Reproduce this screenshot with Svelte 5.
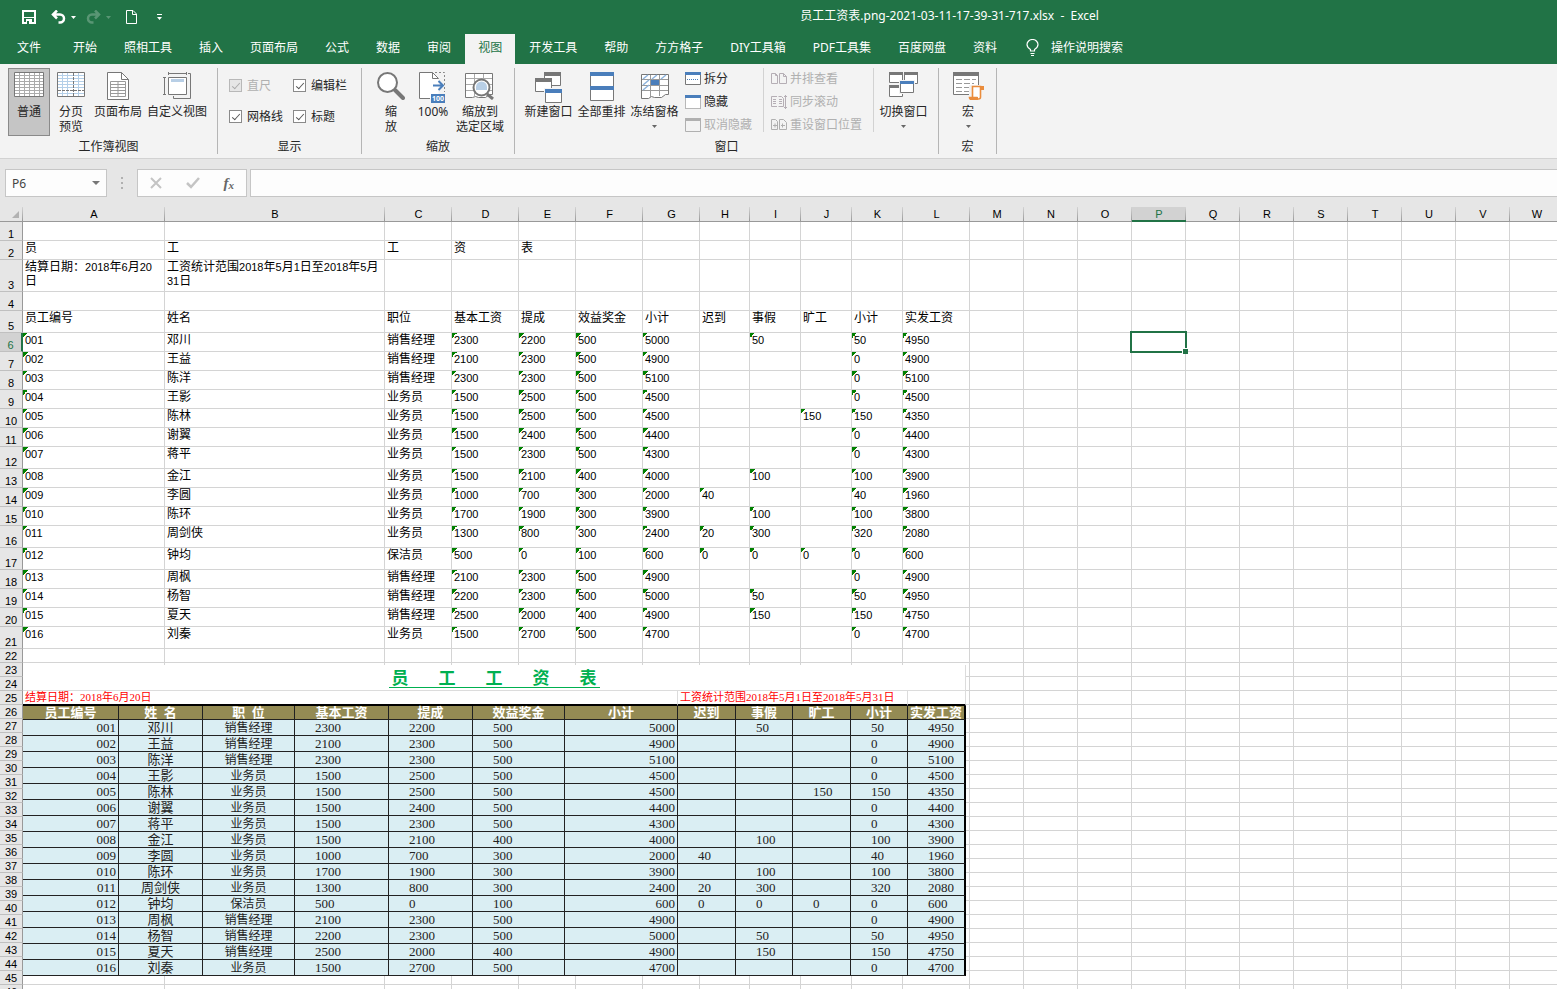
<script lang="ts">
    const tabs = [
        '文件', '开始', '照相工具', '插入', '页面布局', '公式', '数据', '审阅', '视图', '开发工具',
        '帮助', '方方格子', 'DIY工具箱', 'PDF工具集', '百度网盘', '资料'
    ]
    let activeTab = $state('视图')
    let innerWidth = $state(1200)
    let innerHeight = $state(800)

    const header = ['员工编号', '姓名', '职位', '基本工资', '提成', '效益奖金', '小计', '迟到', '事假', '旷工', '小计', '实发工资']
    const staff = [
        ['001', '邓川', '销售经理', '2300', '2200', '500', '5000', '', '50', '', '50', '4950'],
        ['002', '王益', '销售经理', '2100', '2300', '500', '4900', '', '', '', '0', '4900'],
        ['003', '陈洋', '销售经理', '2300', '2300', '500', '5100', '', '', '', '0', '5100'],
        ['004', '王影', '业务员', '1500', '2500', '500', '4500', '', '', '', '0', '4500'],
        ['005', '陈林', '业务员', '1500', '2500', '500', '4500', '', '', '150', '150', '4350'],
        ['006', '谢翼', '业务员', '1500', '2400', '500', '4400', '', '', '', '0', '4400'],
        ['007', '蒋平', '业务员', '1500', '2300', '500', '4300', '', '', '', '0', '4300'],
        ['008', '金江', '业务员', '1500', '2100', '400', '4000', '', '100', '', '100', '3900'],
        ['009', '李圆', '业务员', '1000', '700', '300', '2000', '40', '', '', '40', '1960'],
        ['010', '陈环', '业务员', '1700', '1900', '300', '3900', '', '100', '', '100', '3800'],
        ['011', '周剑侠', '业务员', '1300', '800', '300', '2400', '20', '300', '', '320', '2080'],
        ['012', '钟均', '保洁员', '500', '0', '100', '600', '0', '0', '0', '0', '600'],
        ['013', '周枫', '销售经理', '2100', '2300', '500', '4900', '', '', '', '0', '4900'],
        ['014', '杨智', '销售经理', '2200', '2300', '500', '5000', '', '50', '', '50', '4950'],
        ['015', '夏天', '销售经理', '2500', '2000', '400', '4900', '', '150', '', '150', '4750'],
        ['016', '刘秦', '业务员', '1500', '2700', '500', '4700', '', '', '', '0', '4700']
    ]

    const dateNote = '结算日期：2018年6月20日'
    const rangeNote = '工资统计范围2018年5月1日至2018年5月31日'

    // sheet rows, index 0 is row 1
    const cells: string[][] = [
        [],
        ['员', '工', '工', '资', '表'],
        [dateNote, rangeNote],
        [],
        header,
        ...staff
    ]

    const colWidths = [142, 220, 67, 67, 57, 67, 57, 50, 51, 51, 51, 67]
    const rowHeights = [19, 19, 32, 19, 22, 19, 19, 19, 19, 19, 19, 22, 19, 19, 19, 22, 22, 19, 19, 19, 22]
    const sum = (list: number[]) => list.reduce((a, b) => a + b, 0)

    // only as many columns and rows as the window can show
    const colCount = $derived(Math.max(16, 12 + Math.ceil((innerWidth - 23 - sum(colWidths)) / 54)))
    const rowCount = $derived(Math.max(45, 21 + Math.ceil((innerHeight - 222 - sum(rowHeights)) / 14)))
    const columns = $derived(Array.from({ length: colCount }, (_, i) => ({
        name: (i > 25 ? String.fromCharCode(64 + Math.floor(i / 26)) : '') + String.fromCharCode(65 + (i % 26)),
        width: colWidths[i] ?? 54
    })))
    const rows = $derived(Array.from({ length: rowCount }, (_, i) => ({ n: i + 1, height: rowHeights[i] ?? 14 })))

    const pictureWidths = [96, 84, 92, 94, 84, 92, 113, 58, 57, 58, 57, 58]
    const pictureHeader = header.map((h) => (h === '姓名' || h === '职位' ? h[0] + '  ' + h[1] : h))

    const isNumber = (v: string) => /^\d+$/.test(v)
    const parts = (v: string) => v.split(/(\d+)/).filter(Boolean)
</script>

<svelte:window bind:innerWidth bind:innerHeight />

{#snippet save()}
    <svg width="14" height="14" viewBox="0 0 14 14"><path d="M1 1h12v12H1z" fill="none" stroke="#fff" stroke-width="2" /><path d="M2 7h10v1H2zM4 9h6v5H4z" fill="#fff" /><path d="M5 11h2v3H5z" fill="#217346" /></svg>
{/snippet}
{#snippet undo()}
    <svg width="15" height="14" viewBox="0 0 15 14"><path d="M2 4.500H9a4 4 0 0 1 0 8H7.500M6 0.500L2 4.500l4 4" fill="none" stroke="#fff" stroke-width="2.500" /></svg>
{/snippet}
{#snippet caret()}
    <svg class="caret" width="5" height="3" viewBox="0 0 5 3"><path d="M0 0h5L2.500 3z" fill="currentColor" /></svg>
{/snippet}
{#snippet normalView()}
    <svg width="30" height="26" viewBox="0 0 30 26"><path d="M.5.5h29v24H.5z" fill="#fff" stroke="#777" /><path d="M1 3.500h28M1 6.500h28M1 9.500h28M1 12.500h28M1 15.500h28M1 18.500h28M1 21.500h28M5.500 1v23M10.500 1v23M15.500 1v23M20.500 1v23M25.500 1v23" stroke="#ababab" /></svg>
{/snippet}
{#snippet pageBreak()}
    <svg width="28" height="26" viewBox="0 0 28 26"><path d="M.5.5h27v24H.5z" fill="#fff" stroke="#777" /><path d="M1 3.500h26M1 6.500h26M1 9.500h26M1 12.500h26M1 15.500h26M1 21.500h26M5.500 1v23M10.500 1v23M21.500 1v23" stroke="#b4cfe8" /><path d="M1 18.500h26M16.500 1v23" stroke="#777" stroke-dasharray="3 1" /></svg>
{/snippet}
{#snippet pageLayout()}
    <svg width="22" height="28" viewBox="0 0 22 28"><path d="M.5.5h14l7 7v20H.5z" fill="#fff" stroke="#777" /><path d="M14.500.5v7h7" fill="none" stroke="#777" /><path d="M3.500 9.500h15v15h-15zM3.500 12.500h15M3.500 15.500h15M3.500 18.500h15M3.500 21.500h15M11 9.500v15" fill="none" stroke="#9a9a9a" /></svg>
{/snippet}
{#snippet customView()}
    <svg width="28" height="28" viewBox="0 0 28 28"><path d="M5.500 5.500h18v17h-18z" fill="#fff" stroke="#777" /><path d="M8 7h13v3H8z" fill="#b8cfe6" /><path d="M5.500 0v3M5.500 1.500h18M23.500 0v3M0 5.500h3M1.500 5.500v17M0 22.500h3M25 1.500h2.500v25h-17V24" fill="none" stroke="#777" /></svg>
{/snippet}
{#snippet magnifier()}
    <svg width="28" height="28" viewBox="0 0 28 28"><path d="M18 18l8 8" stroke="#777" stroke-width="4" stroke-linecap="round" /><circle cx="10.500" cy="10.500" r="9.500" fill="#fff" stroke="#777" stroke-width="2" /></svg>
{/snippet}
{#snippet zoom100()}
    <svg width="28" height="31" viewBox="0 0 28 31"><path d="M.5.5h14l5 6v20H.5z" fill="#fff" /><path d="M11 26.500H.5V.5h13l6 6" fill="none" stroke="#777" /><path d="M13.500.5v6h6" fill="none" stroke="#777" /><path d="M16 .5h9.500V20" fill="none" stroke="#888" stroke-dasharray="2 2" /><path d="M14 13.500h9M19.500 9l4.500 4.500-4.500 4.500" fill="none" stroke="#4a7ebb" stroke-width="2" /><path d="M12 22h14v9H12z" fill="#4a7ebb" /><text x="19" y="29" text-anchor="middle" font-size="7" font-weight="bold" fill="#fff">100</text></svg>
{/snippet}
{#snippet zoomSelection()}
    <svg width="30" height="28" viewBox="0 0 30 28"><path d="M.5 1.500h27v21h-3l-4 3h-7l-3-1-3 1H.5z" fill="#fff" stroke="#777" /><path d="M1 6.500h26M1 12.500h26M1 18.500h26M9.500 2v23M18.500 2v22" stroke="#aaa" /><path d="M22 22l6 5" stroke="#777" stroke-width="3" /><circle cx="16.500" cy="15.500" r="8" fill="#fff" stroke="#777" stroke-width="2" /><path d="M11 15a5.500 5.500 0 0 1 11 0v3H11z" fill="#b8cfe6" /></svg>
{/snippet}
{#snippet newWindow()}
    <svg width="28" height="31" viewBox="0 0 28 31"><path d="M9.500.5h16v13h-16z" fill="#fff" stroke="#777" /><path d="M9 0h17v4H9z" fill="#777" /><path d="M.5 6.500h16v13H.5z" fill="#fff" stroke="#777" /><path d="M0 6h17v4H0z" fill="#777" /><path d="M9 16h19v15H9z" fill="#f3f3f3" /><path d="M10.500 17.500h16v13h-16z" fill="#fff" stroke="#777" /><path d="M10 17h17v4H10z" fill="#4a7ebb" /></svg>
{/snippet}
{#snippet arrangeAll()}
    <svg width="24" height="29" viewBox="0 0 24 29"><path d="M.5.5h23v28H.5z" fill="#fff" stroke="#777" /><path d="M0 0h24v4H0zM0 14h24v4H0z" fill="#4a7ebb" /></svg>
{/snippet}
{#snippet freezePanes()}
    <svg width="28" height="28" viewBox="0 0 28 28"><path d="M.5 2.500h27v20h-3l-4 3h-7l-3 -1-3 2H.5z" fill="#fff" stroke="#777" /><path d="M1 7.500h26M1 13.500h26M1 18.500h26M9.500 3v22M18.500 3v21" stroke="#999" /><path d="M2 7l5-4M11 7l5-4M20 7l5-4M2 13l6-5M2 18l6-5" stroke="#8db3dc" stroke-width="1.500" /><path d="M10 8h8v5h-8z" fill="#4a7ebb" /></svg>
{/snippet}
{#snippet switchWindow()}
    <svg width="29" height="26" viewBox="0 0 29 26"><path d="M.5.500h13v10H.5zM15.500.5h13v11h-13zM.5 13.500h13v11H.5z" fill="#fff" stroke="#777" /><path d="M0 0h14v3H0zM15 0h14v3H15zM0 13h14v3H0z" fill="#777" /><path d="M10 8h16v14H10z" fill="#f3f3f3" /><path d="M11.500 9.500h13v11h-13z" fill="#fff" stroke="#777" /><path d="M11 9h14v3H11z" fill="#4a7ebb" /></svg>
{/snippet}
{#snippet macro()}
    <svg width="31" height="29" viewBox="0 0 31 29"><path d="M.5.5h25v22H.5z" fill="#fff" stroke="#777" /><path d="M0 0h26v4H0z" fill="#777" /><path d="M3 7.500h6M3 11.500h6M3 15.500h6M3 19.500h6M11 7.500h6M11 11.500h6M11 15.500h5M11 19.500h5M19 7.500h4M19 11.500h2" stroke="#999" /><path d="M16 13h15v15H16z" fill="#f3f3f3" /><path d="M19.500 25V14.500h8V25q0 2-2 2h-7q-2 0-2-1.500h8" fill="#fff" stroke="#ea8c3c" stroke-width="1.600" /><path d="M27 14h4v4h-3M16 25h9v3h-8z" fill="#ea8c3c" /></svg>
{/snippet}
{#snippet split()}
    <svg width="16" height="14" viewBox="0 0 16 14"><path d="M.5.5h15v12H.5z" fill="#fff" stroke="#777" /><path d="M0 0h16v3H0z" fill="#4a7ebb" /><path d="M2 7.500h12" stroke="#4a7ebb" stroke-dasharray="1 1" /></svg>
{/snippet}
{#snippet hide()}
    <svg width="16" height="14" viewBox="0 0 16 14"><path d="M.5.5h15v13H.5z" fill="#fff" stroke="#777" stroke-dasharray="1 1" /><path d="M0 0h16v3H0z" fill="#4a7ebb" /></svg>
{/snippet}
{#snippet unhide()}
    <svg width="16" height="14" viewBox="0 0 16 14"><path d="M.5.5h15v13H.5z" fill="#f3f3f3" stroke="#b0b0b0" /><path d="M0 0h16v3H0z" fill="#b0b0b0" /></svg>
{/snippet}
{#snippet sideBySide()}
    <svg width="16" height="12" viewBox="0 0 16 12"><path d="M.5.5h4l2 2v8h-6zM8.500.5h4l3 3v7h-7zM4.500.5v2h2M12.500.5v3h3" fill="none" stroke="#b5aeb5" /></svg>
{/snippet}
{#snippet syncScroll()}
    <svg width="16" height="16" viewBox="0 0 16 16"><path d="M6 2.500H.5v10H6M7.500 2.500h3l2 2v8h-5M2 5.500h3M2 7.500h3M2 9.500h3M8 5.500h3M8 7.500h3M8 9.500h3M14.500 1v14M13 2.500h3M13 13.500h3" fill="none" stroke="#b5aeb5" /></svg>
{/snippet}
{#snippet resetPos()}
    <svg width="16" height="12" viewBox="0 0 16 12"><path d="M.5.5h4l2 2v8h-6zM8.500.5h4l3 3v7h-7zM2 6.500h4M4 4.500v4M10 6.500h4M11.500 4.500v4" fill="none" stroke="#b0b0b0" /></svg>
{/snippet}

{#snippet big(icon, lines: string[], size = '', arrow = false)}
    <button class="big {size}">
        <span class="icon">{@render icon()}</span>
        {#each lines as line}
            <span>{line}</span>
        {/each}
        {#if arrow}{@render caret()}{/if}
    </button>
{/snippet}
{#snippet small(icon, label: string, disabled = false)}
    <button class="small" {disabled}>
        <span class="icon">{@render icon()}</span>
        {label}
    </button>
{/snippet}
{#snippet mixed(value: string)}
    {#each parts(value) as part}{#if isNumber(part)}<span class="num">{part}</span>{:else}{part}{/if}{/each}
{/snippet}

<div class="excel">
    <header class="titlebar">
        <div class="quick">
            <button aria-label="保存">{@render save()}</button>
            <button class="drop" aria-label="撤消">{@render undo()}{@render caret()}</button>
            <button class="drop redo" aria-label="恢复" disabled>{@render undo()}{@render caret()}</button>
            <button aria-label="新建">
                <svg width="11" height="14" viewBox="0 0 11 14"><path d="M.5.5h6.500l3.500 3.500v9.500H.5zM6.500.5v4h4" fill="none" stroke="#fff" /></svg>
            </button>
            <button class="customize" aria-label="自定义快速访问工具栏">
                <svg width="5" height="6" viewBox="0 0 5 6"><path d="M0 0h5v1H0zM0 3h5L2.500 6z" fill="#fff" /></svg>
            </button>
        </div>
        <h1>员工工资表.png-2021-03-11-17-39-31-717.xlsx &nbsp;- &nbsp;Excel</h1>
    </header>

    <nav class="tabs">
        {#each tabs as tab}
            <button class:active={tab === activeTab} onclick={() => (activeTab = tab)}>{tab}</button>
        {/each}
        <button class="tell">
            <svg width="13" height="17" viewBox="0 0 13 17"><path d="M4.500 12V10.500C2 9 1 7.500 1 5.500a5.500 5 0 0 1 11 0c0 2-1 3.500-3.500 5V12zM4.500 14.500h4M5 16.500h3" fill="none" stroke="#fff" stroke-width="1.200" /></svg>
            操作说明搜索
        </button>
    </nav>

    <div class="ribbon">
        <section class="group views">
            <div class="tools">
                {@render big(normalView, ['普通'], 'w42 pressed')}
                {@render big(pageBreak, ['分页', '预览'], 'w42')}
                {@render big(pageLayout, ['页面布局'], 'w52')}
                {@render big(customView, ['自定义视图'], 'w66')}
            </div>
            <h2>工作簿视图</h2>
        </section>
        <section class="group show">
            <div class="checks">
                <label class="disabled"><input type="checkbox" checked disabled />直尺</label>
                <label><input type="checkbox" checked />编辑栏</label>
                <label><input type="checkbox" checked />网格线</label>
                <label><input type="checkbox" checked />标题</label>
            </div>
            <h2>显示</h2>
        </section>
        <section class="group zoom">
            <div class="tools">
                {@render big(magnifier, ['缩', '放'], 'w42')}
                {@render big(zoom100, ['100%'], 'w42')}
                {@render big(zoomSelection, ['缩放到', '选定区域'], 'w52')}
            </div>
            <h2>缩放</h2>
        </section>
        <section class="group window">
            <div class="tools">
                {@render big(newWindow, ['新建窗口'], 'w53')}
                {@render big(arrangeAll, ['全部重排'], 'w53')}
                {@render big(freezePanes, ['冻结窗格'], 'w53', true)}
                <div class="stack">
                    {@render small(split, '拆分')}
                    {@render small(hide, '隐藏')}
                    {@render small(unhide, '取消隐藏', true)}
                </div>
                <div class="stack ruled">
                    {@render small(sideBySide, '并排查看', true)}
                    {@render small(syncScroll, '同步滚动', true)}
                    {@render small(resetPos, '重设窗口位置', true)}
                </div>
                {@render big(switchWindow, ['切换窗口'], 'w53', true)}
            </div>
            <h2>窗口</h2>
        </section>
        <section class="group macros">
            <div class="tools">
                {@render big(macro, ['宏'], 'w42', true)}
            </div>
            <h2>宏</h2>
        </section>
    </div>

    <div class="formula-bar">
        <div class="name-box">
            <input aria-label="名称框" value="P6" />
            <button aria-label="名称列表"><svg width="8" height="4" viewBox="0 0 8 4"><path d="M0 0h8L4 4z" fill="#777" /></svg></button>
        </div>
        <svg class="dots" width="2" height="12" viewBox="0 0 2 12"><path d="M0 0h2v2H0zM0 5h2v2H0zM0 10h2v2H0z" fill="#b0b0b0" /></svg>
        <div class="entry">
            <button aria-label="取消"><svg width="12" height="12" viewBox="0 0 12 12"><path d="M1 1l10 10M11 1L1 11" stroke="#c4c4c4" stroke-width="2" /></svg></button>
            <button aria-label="输入"><svg width="14" height="12" viewBox="0 0 14 12"><path d="M1 6l4 4 8-9" fill="none" stroke="#c4c4c4" stroke-width="2.500" /></svg></button>
            <button class="fx" aria-label="插入函数">f<sub>x</sub></button>
        </div>
        <input class="formula" aria-label="编辑栏" />
    </div>

    <main class="sheet">
        <div class="grid">
            <table class="cells">
                <colgroup>
                    <col style="width: 23px" />
                    {#each columns as col}
                        <col style="width: {col.width}px" />
                    {/each}
                </colgroup>
                <thead>
                    <tr>
                        <td class="corner"><svg width="7" height="7" viewBox="0 0 7 7"><path d="M7 0v7H0z" fill="#b2b2b2" /></svg></td>
                        {#each columns as col}
                            <th class:selected={col.name === 'P'}>{col.name}</th>
                        {/each}
                    </tr>
                </thead>
                <tbody>
                    {#each rows as row, r}
                        <tr style="height: {row.height}px">
                            <th class:selected={row.n === 6}>{row.n}</th>
                            {#each columns as col, c}
                                {@const value = cells[r]?.[c] ?? ''}
                                <td class:flag={isNumber(value)} class:cursor={row.n === 6 && col.name === 'P'}>{@render mixed(value)}</td>
                            {/each}
                        </tr>
                    {/each}
                </tbody>
            </table>

            <!-- payroll picture floating on the sheet -->
            <table class="picture">
                <colgroup>
                    {#each pictureWidths as width}
                        <col style="width: {width}px" />
                    {/each}
                </colgroup>
                <thead>
                    <tr class="heading">
                        <td colspan="12"><div>{#each '员工工资表' as char}<span>{char}</span>{/each}</div></td>
                    </tr>
                    <tr class="notes">
                        <td colspan="7">{dateNote}</td>
                        <td colspan="4">{rangeNote}</td>
                        <td></td>
                    </tr>
                    <tr class="names">
                        {#each pictureHeader as name}
                            <th>{name}</th>
                        {/each}
                    </tr>
                </thead>
                <tbody>
                    {#each staff as person}
                        <tr>
                            {#each person as value}
                                <td>{value}</td>
                            {/each}
                        </tr>
                    {/each}
                </tbody>
            </table>
        </div>
    </main>
</div>

<style>
    :global(body) { margin: 0; }

    .excel {
        display: flex;
        flex-direction: column;
        height: 100vh;
        overflow: hidden;
        background: #fff;
        color: #262626;
        font: 12px/15px "Noto Sans", "Noto Sans CJK SC", sans-serif;
    }

    button, input {
        font: inherit;
        color: inherit;
        border: 0;
        padding: 0;
        margin: 0;
        background: none;
    }
    h1, h2 { margin: 0; font: inherit; }
    svg { display: block; }

    .titlebar {
        display: flex;
        align-items: center;
        height: 34px;
        background: #217346;
        color: #fff;
    }
    .quick {
        display: flex;
        align-items: center;
        width: 51.4%;
        padding-left: 22px;
        box-sizing: border-box;
        gap: 15px;
    }
    .quick .drop { display: flex; align-items: center; gap: 5px; }
    .quick .redo { margin-left: -5px; opacity: 0.25; }
    .quick .redo svg:first-child { transform: scaleX(-1); }
    .quick .customize { margin-left: 5px; }
    .titlebar h1 { white-space: nowrap; line-height: 32px; height: 34px; }

    .tabs {
        display: flex;
        gap: 1px;
        height: 30px;
        background: #217346;
        color: #fff;
    }
    .tabs button { padding: 0 13px 3px; white-space: nowrap; }
    .tabs button:first-child { padding: 0 18px 3px 17px; }
    .tabs .active { background: #f3f3f3; color: #217346; }
    .tabs .tell { display: flex; align-items: center; gap: 12px; padding-left: 15px; }

    .ribbon {
        display: flex;
        height: 94px;
        background: #f3f3f3;
        border-bottom: 1px solid #d2d2d2;
    }
    .group {
        display: flex;
        flex-direction: column;
        justify-content: space-between;
        margin: 4px 0;
        border-right: 1px solid #b5b5b5;
        box-sizing: border-box;
    }
    .group h2 { text-align: center; line-height: 14px; }
    .views { width: 218px; }
    .show { width: 144px; }
    .zoom { width: 153px; }
    .window { width: 424px; }
    .macros { width: 58px; }

    .tools { display: flex; align-items: flex-start; padding-left: 8px; }
    .window .tools { padding-left: 7px; }
    .big {
        display: flex;
        flex-direction: column;
        align-items: center;
        height: 68px;
        box-sizing: border-box;
        border: 1px solid transparent;
        white-space: nowrap;
    }
    .big .icon { height: 32px; padding-top: 3px; }
    .w42 { width: 42px; }
    .w52 { width: 52px; }
    .w53 { width: 53px; }
    .w66 { width: 66px; }
    .pressed { background: #c5c5c5; border-color: #8a8a8a; }
    .big .caret { color: #666; margin-top: 6px; }

    .stack {
        display: flex;
        flex-direction: column;
        gap: 8px;
        padding: 3px 11px 0 4px;
    }
    .ruled {
        border: solid #d2d2d2;
        border-width: 0 1px;
        margin-right: 3px;
        padding: 3px 11px 0 7px;
    }
    .small { display: flex; align-items: center; gap: 3px; height: 15px; white-space: nowrap; }
    .small:disabled, .checks .disabled { color: #b0b0b0; }

    .checks {
        display: grid;
        grid-template-columns: 64px auto;
        row-gap: 16px;
        padding: 10px 0 0 11px;
    }
    .checks label { display: flex; align-items: center; gap: 5px; white-space: nowrap; }
    .checks input {
        appearance: none;
        display: grid;
        place-items: center;
        width: 13px;
        height: 13px;
        border: 1px solid #8a8a8a;
        background: #fff;
    }
    .checks input:checked::after {
        content: "";
        width: 3px;
        height: 7px;
        margin-bottom: 2px;
        border: solid #555;
        border-width: 0 1px 1px 0;
        transform: rotate(42deg);
    }
    .checks input:disabled { border-color: #b8b8b8; background: #e6e6e6; }
    .checks input:disabled::after { border-color: #aaa; }

    .formula-bar {
        display: flex;
        align-items: center;
        height: 28px;
        padding: 10px 0 0 5px;
        background: #e6e6e6;
    }
    .name-box, .entry, .formula {
        display: flex;
        align-items: center;
        height: 28px;
        box-sizing: border-box;
        background: #fdfdfd;
        border: 1px solid #c6c6c6;
    }
    .name-box { width: 102px; padding: 0 6px; }
    .name-box input { flex: 1; min-width: 0; color: #444; }
    .dots { margin: 0 14px; }
    .entry { width: 110px; padding: 0 12px; justify-content: space-between; margin-right: 3px; }
    .entry .fx {
        font: italic bold 15px/18px "Liberation Serif", serif;
        color: #666;
    }
    .fx sub { font-size: 11px; line-height: 0; vertical-align: -1px; }
    .formula { flex: 1; min-width: 0; border-right: 0; }

    .sheet {
        flex: 1;
        min-height: 0;
        overflow: hidden;
        padding-top: 10px;
        background: #e6e6e6;
    }
    .grid { position: relative; width: max-content; background: #fff; }

    table { table-layout: fixed; width: 0; border-spacing: 0; }
    .cells {
        color: #000;
        font-family: "Liberation Sans", "Noto Sans CJK SC", sans-serif;
        line-height: 14px;
    }
    .cells td, .cells th { padding: 0; box-sizing: border-box; }
    .cells th { font-size: 11px; font-weight: normal; line-height: 13px; background: #e6e6e6; }
    .cells thead th, .corner {
        height: 15px;
        border-bottom: 1px solid #999;
        background: linear-gradient(#d4d4d4, #999) right / 1px 100% no-repeat #e6e6e6;
    }
    .cells thead .selected { background-color: #d2d2d2; color: #217346; border-bottom: 2px solid #217346; line-height: 12px; }
    .corner svg { margin-left: 12px; }
    .cells tbody th {
        vertical-align: bottom;
        line-height: 11px;
        border-right: 1px solid #999;
        border-bottom: 1px solid #c0c0c0;
    }
    .cells tbody .selected { background: #d2d2d2; color: #217346; border-right: 2px solid #217346; }
    .cells tbody td {
        padding: 0 2px;
        vertical-align: top;
        border: solid #d4d4d4;
        border-width: 0 1px 1px 0;
    }
    .num { font-size: 11px; }
    .flag { background: linear-gradient(to bottom right, #008000 50%, transparent 50%) 0 0 / 5px 5px no-repeat; }

    .cells .cursor { position: relative; }
    .cursor::before {
        content: "";
        position: absolute;
        inset: -2px;
        border: 2px solid #217346;
    }
    .cursor::after {
        content: "";
        position: absolute;
        right: -3px;
        bottom: -3px;
        width: 5px;
        height: 5px;
        background: #217346;
        border: solid #fff;
        border-width: 1px 0 0 1px;
    }

    .picture {
        position: absolute;
        left: 23px;
        top: 458px;
        background: #fff;
        color: #222;
        font: 13px/14px "Liberation Serif", "Noto Sans CJK SC", serif;
    }
    .picture td, .picture th { padding: 0; box-sizing: border-box; white-space: nowrap; }
    .picture .heading td {
        height: 26px;
        padding-bottom: 2px;
        border: solid #dcdcdc;
        border-width: 0 1px 1px 0;
        vertical-align: bottom;
    }
    .heading div {
        display: flex;
        gap: 30px;
        width: max-content;
        margin: 0 auto;
        padding: 0 3px;
        border-bottom: 1px solid #00b050;
        color: #00b050;
        font-size: 17px;
        font-weight: bold;
        line-height: 16px;
    }
    .notes td {
        height: 15px;
        border-right: 1px solid #dcdcdc;
        border-bottom: 2px solid #000;
        color: #f00;
        font-size: 11px;
        line-height: 13px;
    }
    .picture .notes td { padding-left: 2px; }
    .names th {
        height: 14px;
        line-height: 13px;
        background: #948b54;
        border: solid #222;
        border-width: 0 1px 1px 0;
        color: #fff;
        white-space: pre;
    }
    .picture tbody td {
        height: 16px;
        background: #daeef3;
        border: solid #222;
        border-width: 0 1px 1px 0;
    }
    .picture tbody td:nth-child(n + 4) { padding-left: 20px; }
    .picture tbody td:nth-child(1), .picture tbody td:nth-child(7) { text-align: right; padding-right: 2px; }
    .picture tbody td:nth-child(2), .picture tbody td:nth-child(3) { text-align: center; }
    .picture tbody td:nth-child(3) { font-size: 12px; }
    .picture tbody td:last-child, .names th:last-child { border-right: 2px solid #000; }
</style>
